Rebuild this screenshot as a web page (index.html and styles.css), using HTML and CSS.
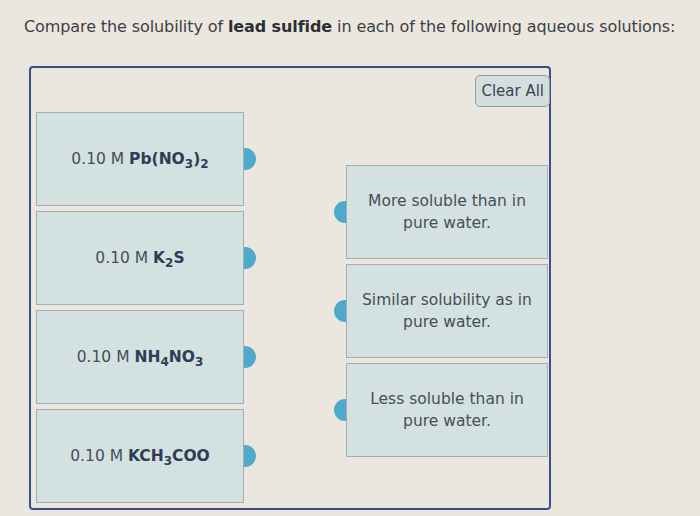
FILE: index.html
```html
<html>
  <head>
    <link rel="stylesheet" href="styles.css">
    <title>Solubility</title>
  </head>
  <body>
    <p class="question">Compare the solubility of <b>lead sulfide</b> in each of the following aqueous solutions:</p>
    <div class="board">
      <div class="col left">
        <div class="item source"><span>0.10 M <b>Pb(NO<sub>3</sub>)<sub>2</sub></b></span></div>
        <div class="item source"><span>0.10 M <b>K<sub>2</sub>S</b></span></div>
        <div class="item source"><span>0.10 M <b>NH<sub>4</sub>NO<sub>3</sub></b></span></div>
        <div class="item source"><span>0.10 M <b>KCH<sub>3</sub>COO</b></span></div>
      </div>
      <div class="col right">
        <button class="clear">Clear All</button>
        <div class="targets">
          <div class="item target"><span>More soluble than in<br>pure water.</span></div>
          <div class="item target"><span>Similar solubility as in<br>pure water.</span></div>
          <div class="item target"><span>Less soluble than in<br>pure water.</span></div>
        </div>
      </div>
    </div>
  </body>
</html>
```
FILE: styles.css
```css
body {
  margin: 0;
  background: #ece7de;
  font-family: "DejaVu Sans", Verdana, sans-serif;
  color: #3b3f47;
}

.question {
  margin: 17px 0 0 24px;
  font-size: 16px;
  letter-spacing: -0.1px;
}

.question b {
  color: #2c2f36;
}

.board {
  margin: 30px 0 0 29px;
  width: 522px;
  height: 444px;
  border: 2px solid #3c4c8e;
  border-radius: 4px;
  box-sizing: border-box;
  display: flex;
  justify-content: space-between;
}

.col {
  display: flex;
  flex-direction: column;
}

.left {
  padding: 44px 0 0 5px;
  gap: 5px;
}

.right {
  align-items: flex-end;
  padding-top: 7px;
}

.clear {
  font-family: "DejaVu Sans", Verdana, sans-serif;
  font-size: 15px;
  color: #3d4450;
  background: #d3dfdf;
  border: 1px solid #8d9ea7;
  border-radius: 5px;
  height: 32px;
  padding: 0 5px;
  margin-right: -1px;
}

.targets {
  margin-top: 58px;
  margin-right: 1px;
  display: flex;
  flex-direction: column;
  gap: 5px;
}

.item {
  position: relative;
  background: #d4e1e1;
  border: 1px solid #a3aeb0;
  box-sizing: border-box;
  display: flex;
  align-items: center;
  justify-content: center;
  text-align: center;
  font-size: 15.5px;
  line-height: 22px;
  color: #484d56;
}

.item b {
  color: #2e3d55;
}

sub {
  font-size: 12px;
  vertical-align: -4px;
  line-height: 0;
}

.source {
  width: 208px;
  height: 94px;
}

.target {
  width: 202px;
  height: 94px;
}

/* connector tabs */
.source::after,
.target::before {
  content: "";
  position: absolute;
  width: 12px;
  height: 22px;
  background: #4ea9cb;
  top: 50%;
  margin-top: -11px;
}

.source::after {
  right: -13px;
  border-radius: 0 11px 11px 0;
}

.target::before {
  left: -13px;
  border-radius: 11px 0 0 11px;
}
```
